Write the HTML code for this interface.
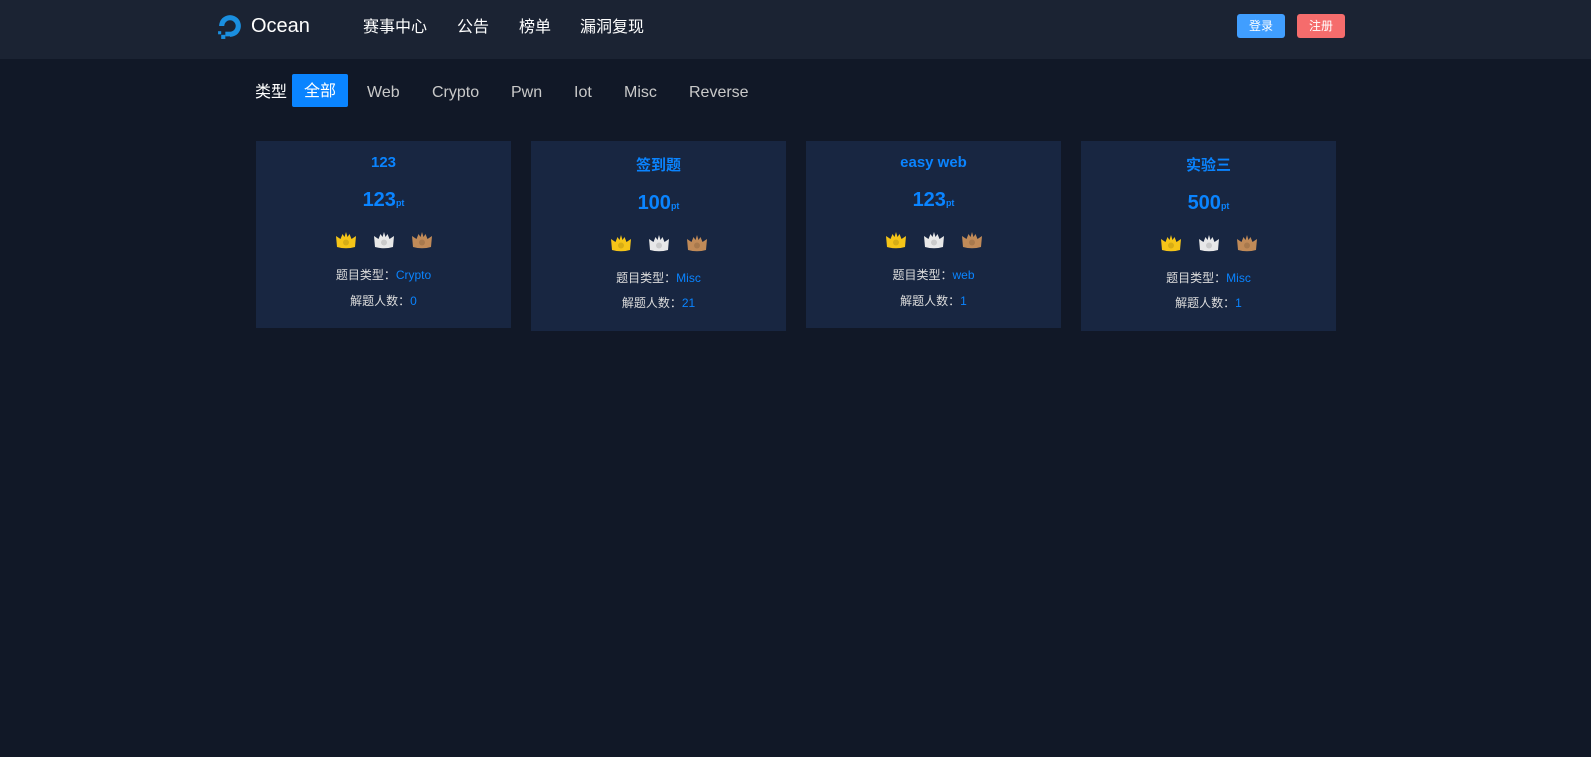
<!DOCTYPE html>
<html><head><meta charset="utf-8"><style>
*{margin:0;padding:0;box-sizing:border-box}
body{width:1591px;height:757px;background:#111827;font-family:"Liberation Sans","Noto Sans CJK SC",sans-serif;position:relative;overflow:hidden}
.hdr{position:absolute;left:0;top:0;width:1591px;height:59px;background:#1b2333}
.a{position:absolute;white-space:nowrap}
.nav{font-size:16px;color:#fff;top:16px;line-height:24px}
.btn{position:absolute;top:14px;height:24px;width:48px;border-radius:3px;color:#fff;font-size:12px;text-align:center;line-height:24px}
.tab{position:absolute;top:81px;font-size:16px;color:#c9c9c9;line-height:24px}
.card{position:absolute;top:141px;width:255px;background:#182641;text-align:center;color:#0a84ff}
.t{font-size:15px;font-weight:bold;position:absolute;left:0;right:0;line-height:20px}
.s{font-size:20px;font-weight:bold;position:absolute;left:0;right:0;line-height:26px}
.s small{font-size:9px}
.cr{position:absolute;left:0;right:0;display:flex;justify-content:center;gap:16px}
.i{font-size:12px;position:absolute;left:0;right:0;color:#ddd;line-height:16px}
.i span{color:#0a84ff}
</style></head><body>
<div class="hdr"></div>
<svg class="a" style="left:216px;top:12px" width="28" height="28" viewBox="0 0 27 27"><path d="M13.5 24 A10.5 10.5 0 1 0 3 13.5 L8 13.5 A5.5 5.5 0 1 1 13.5 19 Z" fill="#1a8fe0"/><rect x="9" y="19" width="4.5" height="4.5" fill="#1a8fe0"/><rect x="5" y="22" width="4" height="4" fill="#1a8fe0"/><rect x="2" y="18.5" width="3" height="3" fill="#1a8fe0"/></svg>
<div class="a" style="left:251px;top:14px;font-size:20px;color:#fff;line-height:25px">Ocean</div>
<div class="a nav" style="left:363px">赛事中心</div>
<div class="a nav" style="left:457px">公告</div>
<div class="a nav" style="left:519px">榜单</div>
<div class="a nav" style="left:580px">漏洞复现</div>
<div class="btn" style="left:1237px;background:#409eff">登录</div>
<div class="btn" style="left:1297px;background:#f56c6c">注册</div>
<div class="a" style="left:255px;top:81px;font-size:16px;color:#fff;line-height:24px">类型</div>
<div class="a" style="left:292px;top:74px;width:56px;height:33px;background:#0a84ff;border-radius:2px;color:#fff;font-size:16px;text-align:center;line-height:35px">全部</div>
<div class="tab" style="left:367px">Web</div>
<div class="tab" style="left:432px">Crypto</div>
<div class="tab" style="left:511px">Pwn</div>
<div class="tab" style="left:574px">Iot</div>
<div class="tab" style="left:624px">Misc</div>
<div class="tab" style="left:689px">Reverse</div>

<svg width="0" height="0" style="position:absolute"><defs><symbol id="c" viewBox="0 0 22 19"><path d="M1 5 L5.5 8 L7.5 3 L9.5 6 L11 1 L12.5 6 L14.5 3 L16.5 8 L21 5 L20 16 Q11 18.5 2 16 Z"/><circle cx="11" cy="11.5" r="3" fill="#000" opacity="0.12"/></symbol></defs></svg>

<div class="card" style="left:256px;height:187px">
<div class="t" style="top:12px">123</div>
<div class="s" style="top:46px">123<small>pt</small></div>
<div class="cr" style="top:90px"><svg width="22" height="19"><use href="#c" fill="#f5c518"/></svg><svg width="22" height="19"><use href="#c" fill="#e8e8e8"/></svg><svg width="22" height="19"><use href="#c" fill="#c08a58"/></svg></div>
<div class="i" style="top:126px">题目类型：<span>Crypto</span></div>
<div class="i" style="top:152px">解题人数：<span>0</span></div>
</div>
<div class="card" style="left:531px;height:190px">
<div class="t" style="top:15px">签到题</div>
<div class="s" style="top:49px">100<small>pt</small></div>
<div class="cr" style="top:93px"><svg width="22" height="19"><use href="#c" fill="#f5c518"/></svg><svg width="22" height="19"><use href="#c" fill="#e8e8e8"/></svg><svg width="22" height="19"><use href="#c" fill="#c08a58"/></svg></div>
<div class="i" style="top:129px">题目类型：<span>Misc</span></div>
<div class="i" style="top:154px">解题人数：<span>21</span></div>
</div>
<div class="card" style="left:806px;height:187px">
<div class="t" style="top:12px">easy web</div>
<div class="s" style="top:46px">123<small>pt</small></div>
<div class="cr" style="top:90px"><svg width="22" height="19"><use href="#c" fill="#f5c518"/></svg><svg width="22" height="19"><use href="#c" fill="#e8e8e8"/></svg><svg width="22" height="19"><use href="#c" fill="#c08a58"/></svg></div>
<div class="i" style="top:126px">题目类型：<span>web</span></div>
<div class="i" style="top:152px">解题人数：<span>1</span></div>
</div>
<div class="card" style="left:1081px;height:190px">
<div class="t" style="top:15px">实验三</div>
<div class="s" style="top:49px">500<small>pt</small></div>
<div class="cr" style="top:93px"><svg width="22" height="19"><use href="#c" fill="#f5c518"/></svg><svg width="22" height="19"><use href="#c" fill="#e8e8e8"/></svg><svg width="22" height="19"><use href="#c" fill="#c08a58"/></svg></div>
<div class="i" style="top:129px">题目类型：<span>Misc</span></div>
<div class="i" style="top:154px">解题人数：<span>1</span></div>
</div>
</body></html>
